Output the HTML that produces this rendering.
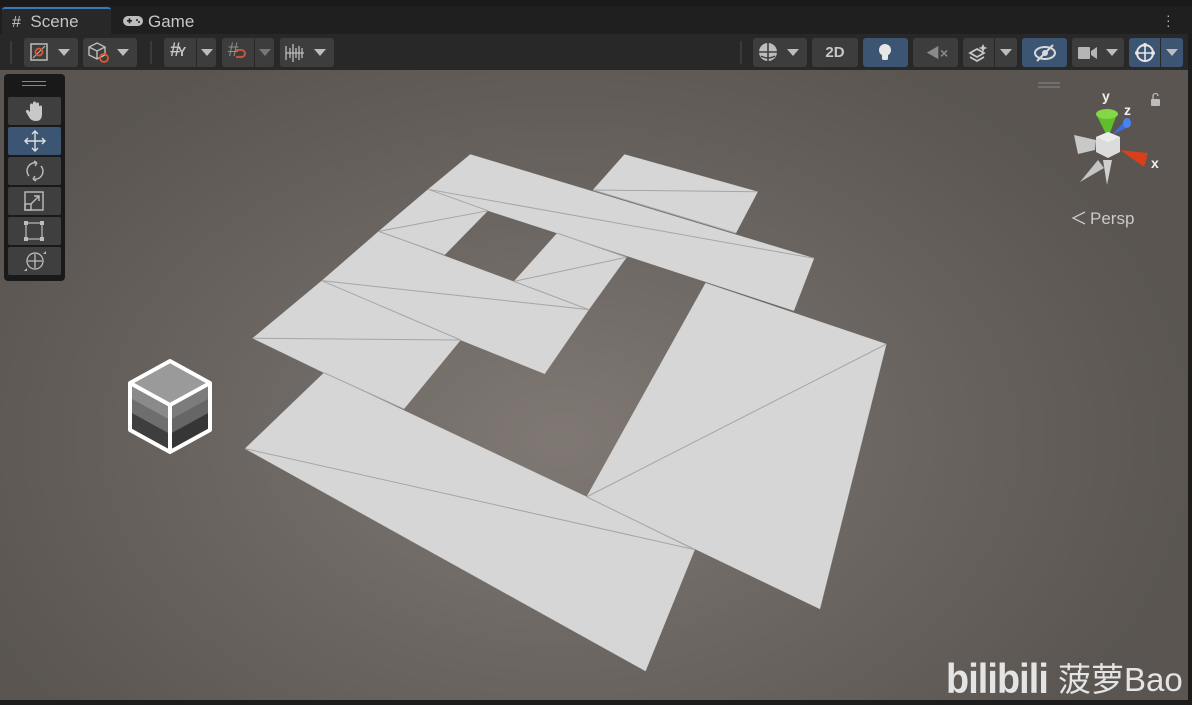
<!DOCTYPE html>
<html><head><meta charset="utf-8"><style>
*{margin:0;padding:0;box-sizing:border-box}
body{width:1192px;height:705px;overflow:hidden;background:#1a1a1a;font-family:"Liberation Sans","Noto Sans CJK SC",sans-serif;position:relative}
.abs{position:absolute}
.tabbar{left:0;top:6px;width:1192px;height:28px;background:#1f1f1f}
.tab{top:8px;height:27px;color:#c8c8c8;font-size:17px;line-height:27px}
.toolbar{left:0;top:34px;width:1192px;height:36px;background:#282828}
.btn{top:38px;height:29px;background:#3d3d3d;border-radius:3px}
.blue{background:#3b5573}
.dd{width:0;height:0;border-left:6px solid transparent;border-right:6px solid transparent;border-top:7px solid #bdbdbd;position:absolute;top:11px}
.sep{top:41px;width:2px;height:23px;background:#3a3a3a}
.scene{left:0;top:70px;width:1188px;height:630px;background:radial-gradient(ellipse 640px 440px at 560px 370px,#7f7873 0%,#6e6864 45%,#5a5551 100%)}
.tools{left:4px;top:74px;width:61px;height:207px;background:#191919;border-radius:4px}
.tb{left:4px;width:53px;height:28px;background:#3f3f3f;border-radius:2px}
</style></head><body>
<div class="abs tabbar"></div>
<div class="abs" style="left:2px;top:7px;width:109px;height:28px;background:#282828;border-top:2px solid #3a79bb;border-radius:3px 3px 0 0"></div>
<div class="abs tab" style="left:12px;color:#c4c4c4"><span style="font-size:16px">#</span>&nbsp; Scene</div>
<svg class="abs" style="left:122px;top:14px" width="22" height="14"><rect x="1" y="2" width="20" height="10" rx="5" fill="#bdbdbd"/><rect x="5" y="6" width="5" height="1.6" fill="#1f1f1f"/><rect x="6.7" y="4.3" width="1.6" height="5" fill="#1f1f1f"/><circle cx="15" cy="6" r="1" fill="#1f1f1f"/><circle cx="17" cy="8" r="1" fill="#1f1f1f"/></svg>
<div class="abs tab" style="left:148px">Game</div>
<div class="abs" style="left:1166px;top:13px;color:#bbb;font-size:14px;line-height:5px;width:4px">·<br>·<br>·</div>
<div class="abs toolbar"></div>
<div class="abs sep" style="left:10px"></div><div class="abs sep" style="left:150px"></div><div class="abs sep" style="left:740px"></div>
<div class="abs btn" style="left:24px;width:54px"><svg class="abs" style="left:5px;top:4px" width="20" height="20"><rect x="2" y="2" width="16" height="16" fill="none" stroke="#bdbdbd" stroke-width="1.5"/><line x1="4" y1="16" x2="16" y2="4" stroke="#bdbdbd"/><circle cx="10" cy="10" r="3.5" fill="none" stroke="#e0582d" stroke-width="1.8"/></svg><div class="dd" style="left:34px"></div></div>
<div class="abs btn" style="left:83px;width:54px"><svg class="abs" style="left:4px;top:3px" width="24" height="24"><path d="M10 2 L18 6 L18 14 L10 18 L2 14 L2 6 Z M2 6 L10 10 L18 6 M10 10 L10 18" fill="none" stroke="#bdbdbd" stroke-width="1.4"/><circle cx="17" cy="17" r="4" fill="none" stroke="#e0582d" stroke-width="1.8"/></svg><div class="dd" style="left:34px"></div></div>
<div class="abs btn" style="left:164px;width:52px"><div class="abs" style="left:6px;top:2px;color:#c4c4c4;font-size:19px;font-weight:bold">#<span style="font-size:13px;margin-left:-3px">Y</span></div><div class="abs" style="left:32px;top:0;width:1px;height:29px;background:#282828"></div><div class="dd" style="left:37px"></div></div>
<div class="abs btn" style="left:222px;width:52px"><div class="abs" style="left:6px;top:2px;color:#8e8e8e;font-size:19px">#</div><div class="abs" style="left:14px;top:11px;width:10px;height:9px;border:2.5px solid #c0563a;border-left:none;border-radius:0 6px 6px 0"></div><div class="abs" style="left:32px;top:0;width:1px;height:29px;background:#282828"></div><div class="dd" style="left:37px;border-top-color:#777"></div></div>
<div class="abs btn" style="left:280px;width:54px"><svg class="abs" style="left:4px;top:4px" width="22" height="22"><path d="M2 4V18M6 6V16M9 2V20M12 6V16M15 4V18M18 6V16M2 11H20" stroke="#bdbdbd" stroke-width="1.3"/></svg><div class="dd" style="left:34px"></div></div>
<div class="abs btn" style="left:753px;width:54px"><svg class="abs" style="left:4px;top:3px" width="24" height="24"><circle cx="11" cy="11" r="9" fill="#bdbdbd"/><path d="M2 11H20M11 2V20" stroke="#3d3d3d" stroke-width="1.6"/><path d="M4 15Q11 19 18 15" stroke="#3d3d3d" fill="none" stroke-width="1.4"/></svg><div class="dd" style="left:34px"></div></div>
<div class="abs btn" style="left:812px;width:46px;color:#c8c8c8;font-weight:bold;font-size:15px;text-align:center;line-height:29px">2D</div>
<div class="abs btn blue" style="left:863px;width:45px"><svg class="abs" style="left:14px;top:5px" width="18" height="20"><circle cx="8" cy="7" r="6" fill="#e6e6e6"/><rect x="5" y="11" width="6" height="6" rx="1.5" fill="#e6e6e6"/></svg></div>
<div class="abs btn" style="left:913px;width:45px"><div class="abs" style="left:13px;top:5px;color:#8a8a8a;font-size:14px;font-weight:bold">◀×</div></div>
<div class="abs btn" style="left:963px;width:54px"><svg class="abs" style="left:5px;top:4px" width="22" height="22"><path d="M2 11L9 7L16 11L9 15Z M2 15L9 19L16 15" fill="none" stroke="#c8c8c8" stroke-width="1.8"/><path d="M15 2L16.5 5L19.5 6L16.5 7L15 10L13.5 7L10.5 6L13.5 5Z" fill="#c8c8c8"/></svg><div class="abs" style="left:31px;top:0;width:1px;height:29px;background:#282828"></div><div class="dd" style="left:37px"></div></div>
<div class="abs btn blue" style="left:1022px;width:45px"><svg class="abs" style="left:10px;top:5px" width="26" height="20"><ellipse cx="13" cy="10" rx="10" ry="6" fill="none" stroke="#d8d8d8" stroke-width="2"/><circle cx="13" cy="10" r="3" fill="#d8d8d8"/><line x1="5" y1="18" x2="21" y2="2" stroke="#d8d8d8" stroke-width="2"/></svg></div>
<div class="abs btn" style="left:1072px;width:52px"><svg class="abs" style="left:5px;top:7px" width="22" height="16"><rect x="1" y="2" width="12" height="12" rx="1" fill="#b5b5b5"/><path d="M14 6L20 2V14L14 10Z" fill="#b5b5b5"/></svg><div class="dd" style="left:34px"></div></div>
<div class="abs btn blue" style="left:1129px;width:54px"><svg class="abs" style="left:5px;top:3px" width="24" height="24"><circle cx="11" cy="12" r="8" fill="none" stroke="#e6e6e6" stroke-width="2"/><path d="M3 12H19M11 4V20" stroke="#e6e6e6" stroke-width="1.6"/><circle cx="11" cy="4" r="2" fill="#e6e6e6"/><circle cx="3" cy="12" r="2" fill="#e6e6e6"/><circle cx="19" cy="12" r="2" fill="#e6e6e6"/></svg><div class="abs" style="left:31px;top:0;width:1px;height:29px;background:#282828"></div><div class="dd" style="left:37px"></div></div>

<div class="abs scene"></div>
<div class="abs" style="left:1188px;top:34px;width:4px;height:671px;background:#1c1c1c"></div>
<div class="abs" style="left:0;top:700px;width:1192px;height:5px;background:#1c1c1c"></div>

<svg class="abs" style="left:0;top:0" width="1192" height="705">
<g transform="translate(240,140) scale(0.4202,0.3448)" fill="#d6d6d6" stroke="#d6d6d6" stroke-width="1">
<polygon points="548,42 1366,343 1318,495 755,270 590,205 448,143"/>
<polygon points="915,42 1232,150 1180,270 840,145"/>
<polygon points="448,143 590,205 487,333 330,265"/>
<polygon points="330,265 830,492 725,678 525,580 30,575 195,408"/>
<polygon points="755,270 920,340 830,492 652,410"/>
<polygon points="30,575 525,580 390,780 200,675"/>
<polygon points="200,675 825,1035 1082,1188 965,1540 12,895"/>
<polygon points="1108,415 1538,592 1380,1360 825,1035"/>
</g>
<g transform="translate(240,140) scale(0.4202,0.3448)" stroke="#a6a6a6" stroke-width="1" fill="none">
<path vector-effect="non-scaling-stroke" d="M448,143L1366,343 M840,145L1232,150 M840,145L1180,270 M330,265L590,205 M330,265L487,333 M652,410L920,340 M755,270L920,340 M195,408L830,492 M195,408L525,580 M30,575L525,580 M200,675L390,780 M12,895L1082,1188 M825,1035L1538,592 M825,1035L1082,1188 M448,143L590,205 M652,410L830,492"/>
</g>
<!-- cube icon -->
<polygon points="130,383 170,361 210,383 170,405" fill="#9a9a9a"/>
<polygon points="130,383 170,405 170,420 130,398" fill="#8a8a8a"/><polygon points="210,383 170,405 170,420 210,398" fill="#7c7c7c"/>
<polygon points="130,398 170,420 170,434 130,412" fill="#6e6e6e"/><polygon points="210,398 170,420 170,434 210,412" fill="#666"/>
<polygon points="130,412 170,434 170,452 130,430" fill="#3e3e3e"/><polygon points="210,412 170,434 170,452 210,430" fill="#363636"/>
<path d="M170,361 L210,383 L210,430 L170,452 L130,430 L130,383 Z M130,383 L170,405 L210,383 M170,405 L170,452" fill="none" stroke="#fff" stroke-width="4" stroke-linejoin="round"/>
<!-- gizmo -->
<path d="M1038 83H1060M1038 87H1060" stroke="#888" stroke-width="1"/>
<rect x="1151" y="99" width="9" height="7" rx="1" fill="#bdbdbd"/><path d="M1153 99V96a2.5 2.5 0 0 1 5 0" stroke="#bdbdbd" fill="none" stroke-width="1.3"/>
<polygon points="1074,135 1096,140 1095,150 1078,154" fill="#c8c8c8"/>
<polygon points="1080,182 1098,160 1104,168" fill="#c4c4c4"/>
<polygon points="1103,160 1107,185 1112,160" fill="#cfcfcf"/>
<polygon points="1096,114 1117,114 1108,138" fill="#5fbf2a"/><ellipse cx="1107" cy="114" rx="11" ry="5" fill="#83d84a"/>
<polygon points="1112,135 1126,120 1130,126" fill="#3a6fe0"/><ellipse cx="1127" cy="123" rx="4" ry="5" fill="#4a82f0"/>
<polygon points="1120,150 1148,153 1144,167" fill="#d8401c"/>
<polygon points="1096,137 1108,132 1120,137 1120,152 1108,158 1096,152" fill="#dcdcdc"/>
<polygon points="1096,137 1108,142 1120,137 1108,132" fill="#ececec"/>
<text x="1102" y="101" fill="#f0f0f0" font-size="14" font-weight="bold" font-family="Liberation Sans">y</text>
<text x="1124" y="115" fill="#f0f0f0" font-size="14" font-weight="bold" font-family="Liberation Sans">z</text>
<text x="1151" y="168" fill="#f0f0f0" font-size="14" font-weight="bold" font-family="Liberation Sans">x</text>
<path d="M1085 212L1073 218L1085 224" stroke="#c8c8c8" fill="none" stroke-width="1.3"/>
<text x="1090" y="224" fill="#cbcbcb" font-size="17" font-family="Liberation Sans">Persp</text>
</svg>

<div class="abs tools">
<div class="abs" style="left:18px;top:7px;width:24px;height:1px;background:#888"></div>
<div class="abs" style="left:18px;top:11px;width:24px;height:1px;background:#888"></div>
<div class="abs tb" style="top:23px"><svg class="abs" style="left:16px;top:3px" width="22" height="22"><path d="M6 12V5a1.5 1.5 0 0 1 3 0V10V3a1.5 1.5 0 0 1 3 0V10V4a1.5 1.5 0 0 1 3 0V11V7a1.5 1.5 0 0 1 3 0V14Q18 21 12 21Q7 21 5 17L2 12a1.5 1.5 0 0 1 3-1Z" fill="#c8c8c8"/></svg></div>
<div class="abs tb" style="top:53px;background:#3b5573"><svg class="abs" style="left:14px;top:2px" width="26" height="24"><path d="M13 2V22M3 12H23M10 5L13 2L16 5M10 19L13 22L16 19M6 9L3 12L6 15M20 9L23 12L20 15" stroke="#e0e0e0" fill="none" stroke-width="1.4"/></svg></div>
<div class="abs tb" style="top:83px"><svg class="abs" style="left:15px;top:3px" width="24" height="22"><path d="M6 16A8 8 0 0 1 14 3M18 6A8 8 0 0 1 10 19M14 3L11 1M14 3L12 6M10 19L13 21M10 19L12 16" stroke="#bdbdbd" fill="none" stroke-width="1.4"/></svg></div>
<div class="abs tb" style="top:113px"><svg class="abs" style="left:15px;top:3px" width="24" height="22"><rect x="2" y="2" width="18" height="18" fill="none" stroke="#bdbdbd" stroke-width="1.4"/><rect x="2" y="14" width="6" height="6" fill="none" stroke="#bdbdbd" stroke-width="1.4"/><path d="M8 14L16 6M11 6H16V11" stroke="#bdbdbd" fill="none" stroke-width="1.4"/></svg></div>
<div class="abs tb" style="top:143px"><svg class="abs" style="left:15px;top:3px" width="24" height="22"><rect x="3" y="3" width="16" height="16" fill="none" stroke="#bdbdbd" stroke-width="1.2"/><rect x="1" y="1" width="4" height="4" fill="#bdbdbd"/><rect x="17" y="1" width="4" height="4" fill="#bdbdbd"/><rect x="1" y="17" width="4" height="4" fill="#bdbdbd"/><rect x="17" y="17" width="4" height="4" fill="#bdbdbd"/></svg></div>
<div class="abs tb" style="top:173px"><svg class="abs" style="left:14px;top:2px" width="26" height="24"><circle cx="13" cy="12" r="8" fill="none" stroke="#bdbdbd" stroke-width="1.3"/><path d="M13 5V19M6 12H20" stroke="#bdbdbd" stroke-width="1.3"/><path d="M2 22L5 19L5 22Z M24 2L21 5L24 5Z" fill="#bdbdbd"/></svg></div>
</div>

<div class="abs" style="left:946px;top:655px;color:#e4e4e4;font-size:42px;font-weight:bold;letter-spacing:-1px;line-height:48px;transform:scaleX(0.9);transform-origin:left">bilibili</div>
<div class="abs" style="left:1058px;top:660px;color:#e4e4e4;font-size:33px;line-height:40px;white-space:nowrap">菠萝Bao</div>
</body></html>
